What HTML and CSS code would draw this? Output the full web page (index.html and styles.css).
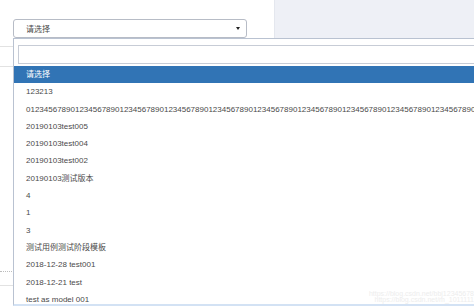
FILE: index.html
```html
<!DOCTYPE html>
<html lang="zh">
<head>
<meta charset="utf-8">
<link rel="stylesheet" href="styles.css">
</head>
<body>
<div class="page">
  <div class="header">
    <div class="left">
      <div class="select">
        <span class="select-text">请选择</span>
        <span class="arrow"></span>
      </div>
    </div>
    <div class="panel"></div>
  </div>
  <div class="table">
    <div class="row r1"></div>
    <div class="row r2"></div>
    <div class="row spacer"></div>
    <div class="row dotted"></div>
  </div>

  <div class="dropdown">
    <div class="search"><input class="search-input" type="text"></div>
    <ul class="results">
      <li class="opt active">请选择</li>
      <li class="opt">123213</li>
      <li class="opt">0123456789012345678901234567890123456789012345678901234567890123456789012345678901234567890123456789012345678901234567890123456789</li>
      <li class="opt">20190103test005</li>
      <li class="opt">20190103test004</li>
      <li class="opt">20190103test002</li>
      <li class="opt">20190103测试版本</li>
      <li class="opt">4</li>
      <li class="opt">1</li>
      <li class="opt">3</li>
      <li class="opt">测试用例测试阶段模板</li>
      <li class="opt">2018-12-28 test001</li>
      <li class="opt">2018-12-21 test</li>
      <li class="opt">test as model 001</li>
    </ul>
  </div>
  <div class="watermark">
    <div>https://blog.csdn.net/bbj12345678</div>
    <div>https://blog.csdn.net/m_1011111</div>
  </div>
</div>
</body>
</html>
```
FILE: styles.css
```css
html, body {
  margin: 0;
  padding: 0;
  overflow: hidden;
  background: #ffffff;
  width: 474px;
  height: 308px;
}
.page {
  position: relative;
  width: 474px;
  height: 308px;
  overflow: hidden;
  font-family: "Liberation Sans", "Noto Sans CJK SC", sans-serif;
  font-size: 8px;
  color: #4a4a4a;
}
.header {
  display: flex;
  height: 39px;
}
.left {
  width: 274px;
  box-sizing: border-box;
  padding: 19px 0 0 13px;
}
.select {
  width: 234px;
  height: 19px;
  box-sizing: border-box;
  border: 1px solid #b7bcc6;
  border-radius: 3px;
  display: flex;
  align-items: center;
  justify-content: space-between;
  padding: 0 6px 0 12px;
  background: #fff;
}
.select-text {
  color: #4a4a4a;
}
.arrow {
  width: 0;
  height: 0;
  border-left: 2.5px solid transparent;
  border-right: 2.5px solid transparent;
  border-top: 3px solid #222;
}
.panel {
  flex: 1;
  background: #eef0f6;
  border-left: 1px solid #e4e7ee;
  border-bottom: 1px solid #c6ccd8;
}
.table {
  display: flex;
  flex-direction: column;
}
.row {
  border-bottom: 1px solid #e2e2e2;
}
.r1 { height: 7px; }
.r2 { height: 19px; }
.spacer { height: 204px; border-bottom: 1px dotted #bdbdbd; }
.dotted { height: 13px; }

.dropdown {
  position: absolute;
  left: 13px;
  top: 38px;
  width: 640px;
  height: 268px;
  box-sizing: border-box;
  border: 1px solid #b9c2d1;
  border-bottom: 2px solid #d3e2f4;
  background: #fff;
  overflow: hidden;
}
.search {
  padding: 6px 4px 2px 4px;
}
.search-input {
  display: block;
  width: 100%;
  height: 19px;
  box-sizing: border-box;
  border: 1px solid #c7ccd6;
  margin: 0;
  padding: 0;
  outline: none;
}
.results {
  list-style: none;
  margin: 0;
  padding: 0;
}
.opt {
  height: 17.3px;
  line-height: 17.3px;
  padding-left: 12px;
  white-space: nowrap;
  color: #4a4a4a;
}
.opt.active {
  background: #3174b5;
  color: #fff;
}
.watermark {
  position: absolute;
  right: 0;
  top: 291px;
  font-size: 7px;
  line-height: 6px;
  color: #ededed;
  text-align: right;
  white-space: nowrap;
}
```
